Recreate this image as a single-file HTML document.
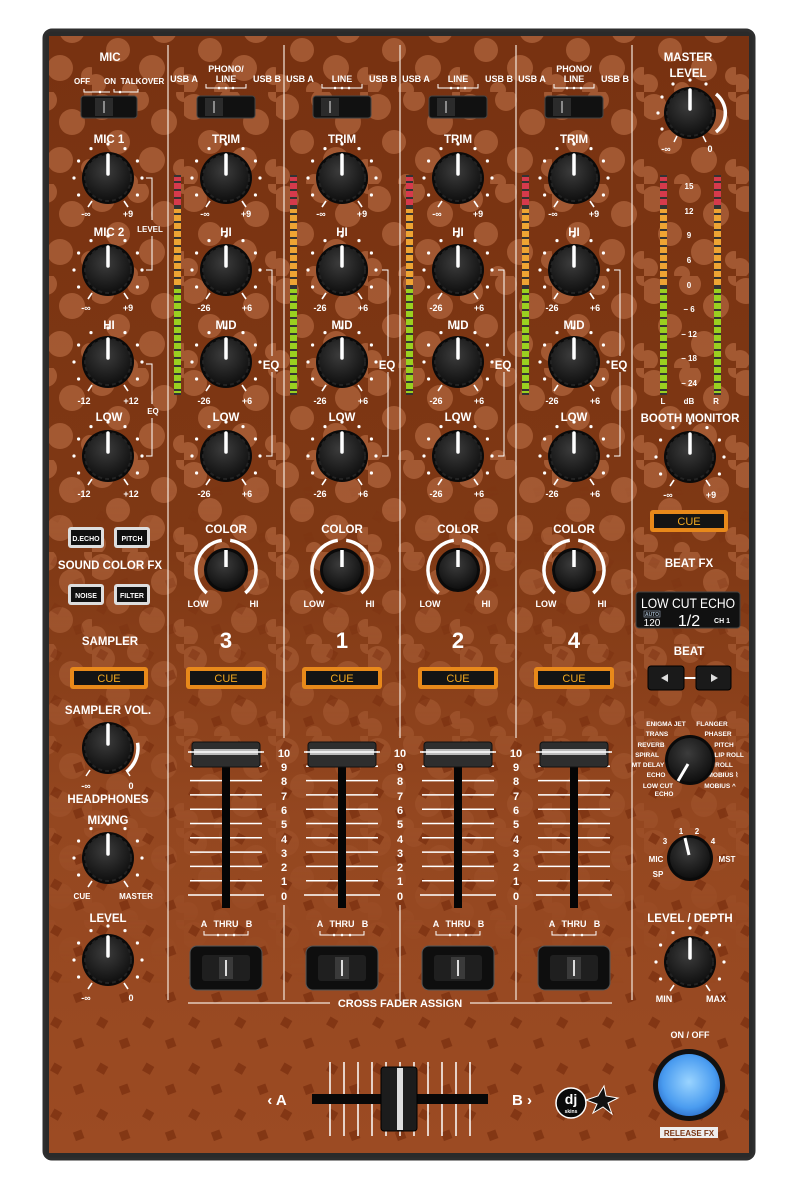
<!DOCTYPE html>
<html><head><meta charset="utf-8"><style>
html,body{margin:0;padding:0;background:#fff;}
svg{display:block;}
text{font-family:"Liberation Sans",sans-serif;font-weight:bold;fill:#fff;text-anchor:middle;}
.s9{font-size:9px}.s8{font-size:8px}.s11{font-size:11.5px}.s7{font-size:7px}
.cue, .cue text{fill:#f2a820;font-size:11px;font-weight:normal}
</style></head><body>
<svg width="799" height="1200" viewBox="0 0 799 1200" xmlns="http://www.w3.org/2000/svg">
<defs>
<linearGradient id="bg" x1="0" y1="0" x2="0" y2="1"><stop offset="0" stop-color="#783211"/><stop offset=".45" stop-color="#7f3814"/><stop offset=".7" stop-color="#944720"/><stop offset="1" stop-color="#9c4b23"/></linearGradient>
<pattern id="pc" patternUnits="userSpaceOnUse" width="92" height="92">
<g fill="#b3683f" opacity=".7">
<circle cx="10" cy="15" r="13"/><circle cx="46" cy="8" r="11"/><circle cx="72" cy="30" r="13"/><circle cx="26" cy="50" r="12"/><circle cx="60" cy="68" r="13"/><circle cx="90" cy="76" r="9"/><circle cx="4" cy="84" r="10"/><circle cx="38" cy="90" r="8"/><circle cx="92" cy="2" r="8"/></g></pattern>
<pattern id="pd" patternUnits="userSpaceOnUse" width="46" height="46">
<g fill="#7a300f" opacity=".75"><rect x="6" y="6" width="9" height="9" transform="rotate(30 10 10)"/><rect x="28" y="27" width="9" height="9" transform="rotate(-20 32 31)"/></g></pattern>
<linearGradient id="mg1" gradientUnits="userSpaceOnUse" x1="0" y1="0" x2="0" y2="1200"><stop offset=".42" stop-color="#fff"/><stop offset=".68" stop-color="#fff" stop-opacity=".35"/><stop offset=".82" stop-color="#fff" stop-opacity="0"/></linearGradient>
<linearGradient id="mg2" gradientUnits="userSpaceOnUse" x1="0" y1="0" x2="0" y2="1200"><stop offset=".4" stop-color="#fff" stop-opacity="0"/><stop offset=".62" stop-color="#fff"/></linearGradient>
<mask id="m1"><rect width="799" height="1200" fill="url(#mg1)"/></mask>
<mask id="m2"><rect width="799" height="1200" fill="url(#mg2)"/></mask>
<radialGradient id="kg" cx=".45" cy=".35" r=".7"><stop offset="0" stop-color="#3c3c3c"/><stop offset="1" stop-color="#0c0c0c"/></radialGradient>
<radialGradient id="blue" cx=".5" cy=".45" r=".6"><stop offset="0" stop-color="#9ad4ff"/><stop offset=".7" stop-color="#4a9cf0"/><stop offset="1" stop-color="#2a6cc8"/></radialGradient>
<g id="kn"><circle r="26" fill="#0a0a0a"/><circle r="23" fill="url(#kg)" stroke="#222" stroke-width="2" stroke-dasharray="4 3"/><line x1="0" y1="-4" x2="0" y2="-23" stroke="#fff" stroke-width="3.5" stroke-linecap="round"/></g>
<g id="dots" fill="#fff"><circle cx="0" cy="-34" r="1.6"/><circle cx="17" cy="-29.4" r="1.6"/><circle cx="29.4" cy="-17" r="1.6"/><circle cx="34" cy="0" r="1.6"/><circle cx="29.4" cy="17" r="1.6"/><circle cx="-17" cy="-29.4" r="1.6"/><circle cx="-29.4" cy="-17" r="1.6"/><circle cx="-34" cy="0" r="1.6"/><circle cx="-29.4" cy="17" r="1.6"/><path d="M16 23L20 29M-16 23L-20 29" stroke="#fff" stroke-width="1.6"/></g>
<g id="kd"><use href="#dots"/><use href="#kn"/></g>
<pattern id="gap" patternUnits="userSpaceOnUse" width="7" height="16"><rect y="6" width="7" height="2" fill="#333"/><rect y="14" width="7" height="2" fill="#333"/></pattern>
<g id="meter"><rect x="0" y="0" width="7" height="220" fill="#333"/><rect x="0" y="2" width="7" height="30" fill="#d63a4c"/><rect x="0" y="34" width="7" height="78" fill="#eea433"/><rect x="0" y="114" width="7" height="104" fill="#9ad020"/><rect x="0" y="0" width="7" height="220" fill="url(#gap)"/></g>
<g id="ch">
<path d="M-20 84v4h40v-4" stroke="#fff" fill="none" stroke-width="1"/>
<circle cx="-7" cy="88" r="1.3" fill="#fff"/><circle cx="0" cy="88" r="1.3" fill="#fff"/><circle cx="7" cy="88" r="1.3" fill="#fff"/>
<rect x="-29" y="96" width="58" height="22" rx="3" fill="#111" stroke="#444"/><rect x="-21" y="98" width="18" height="18" fill="#2b2b2b"/><line x1="-12" y1="101" x2="-12" y2="113" stroke="#aaa" stroke-width="1.5"/>
<use href="#kd" x="0" y="178"/><use href="#kd" x="0" y="270"/><use href="#kd" x="0" y="362"/><use href="#kd" x="0" y="456"/>
<path d="M40 270h6v86M46 372v84h-6" stroke="#fff" fill="none" stroke-width="1"/>
<use href="#meter" x="-52" y="175"/>
<path d="M-19.3 23A30 30 0 0 1 -4.2 -29.7M4.2 -29.7A30 30 0 0 1 19.3 23" transform="translate(0 570)" stroke="#fff" stroke-width="3.5" fill="none"/>
<g transform="translate(0 570)"><circle r="22" fill="#0a0a0a"/><circle r="19" fill="url(#kg)"/><line x1="0" y1="-3" x2="0" y2="-20" stroke="#fff" stroke-width="3.5"/></g>
<rect x="-40" y="667" width="80" height="22" rx="3" fill="#e8891a"/><rect x="-36" y="671" width="72" height="14" fill="#141414"/>
<g stroke="#fff" stroke-width="1.5"><path d="M-38 752h76M-36 766.3h72M-36 780.6h72M-36 794.9h72M-36 809.2h72M-36 823.5h72M-36 837.8h72M-36 852.1h72M-36 866.4h72M-36 880.7h72M-38 895h76"/></g>
<rect x="-4" y="762" width="8" height="146" fill="#050505"/>
<rect x="-34" y="742" width="68" height="25" rx="3" fill="#2e2e2e" stroke="#111"/><rect x="-32" y="749" width="64" height="6" fill="#bbb"/><line x1="-36" y1="752" x2="36" y2="752" stroke="#fff" stroke-width="1.5"/>
<path d="M-22 931v4h44v-4" stroke="#fff" fill="none" stroke-width="1"/>
<circle cx="-8" cy="935" r="1.3" fill="#fff"/><circle cx="0" cy="935" r="1.3" fill="#fff"/><circle cx="8" cy="935" r="1.3" fill="#fff"/>
<rect x="-36" y="946" width="72" height="44" rx="7" fill="#0e0e0e" stroke="#555"/><rect x="-24" y="955" width="48" height="26" rx="3" fill="#1f1f1f"/><rect x="-7" y="957" width="14" height="22" fill="#3a3a3a"/><line x1="0" y1="960" x2="0" y2="976" stroke="#ddd" stroke-width="2"/>
</g>
</defs>
<rect x="44" y="30" width="710" height="1129" rx="8" fill="#2a2a2a"/>
<rect x="49" y="36" width="700" height="1117" fill="url(#bg)"/>
<rect x="49" y="36" width="700" height="1117" fill="url(#pc)" mask="url(#m1)"/>
<rect x="49" y="36" width="700" height="1117" fill="url(#pd)" mask="url(#m2)"/>
<rect x="44" y="30" width="710" height="1129" rx="8" fill="none" stroke="#2e2e2e" stroke-width="3"/>

<g stroke="#f3e6dc" stroke-width="1.2">
<path d="M168 45V1000M632 45V1000M284 45V738M284 905V1000M400 45V738M400 905V1000M516 45V738M516 905V1000M188 1003H330M470 1003H612"/>
</g>

<use href="#ch" x="226"/><use href="#ch" x="342"/><use href="#ch" x="458"/><use href="#ch" x="574"/>

<g class="s9">
<text x="184" y="82">USB A</text><text x="226" y="72">PHONO/</text><text x="226" y="82">LINE</text><text x="267" y="82">USB B</text>
<text x="300" y="82">USB A</text><text x="342" y="82">LINE</text><text x="383" y="82">USB B</text>
<text x="416" y="82">USB A</text><text x="458" y="82">LINE</text><text x="499" y="82">USB B</text>
<text x="532" y="82">USB A</text><text x="574" y="72">PHONO/</text><text x="574" y="82">LINE</text><text x="615" y="82">USB B</text>
</g>
<g class="s11">
<text x="226" y="143">TRIM</text><text x="342" y="143">TRIM</text><text x="458" y="143">TRIM</text><text x="574" y="143">TRIM</text>
<text x="226" y="236">HI</text><text x="342" y="236">HI</text><text x="458" y="236">HI</text><text x="574" y="236">HI</text>
<text x="226" y="329">MID</text><text x="342" y="329">MID</text><text x="458" y="329">MID</text><text x="574" y="329">MID</text>
<text x="226" y="421">LOW</text><text x="342" y="421">LOW</text><text x="458" y="421">LOW</text><text x="574" y="421">LOW</text>
<text x="226" y="533">COLOR</text><text x="342" y="533">COLOR</text><text x="458" y="533">COLOR</text><text x="574" y="533">COLOR</text>
<text x="271" y="369">EQ</text><text x="387" y="369">EQ</text><text x="503" y="369">EQ</text><text x="619" y="369">EQ</text>
</g>
<g class="s9">
<text x="205" y="217">-∞</text><text x="246" y="217">+9</text><text x="321" y="217">-∞</text><text x="362" y="217">+9</text><text x="437" y="217">-∞</text><text x="478" y="217">+9</text><text x="553" y="217">-∞</text><text x="594" y="217">+9</text>
<text x="204" y="311">-26</text><text x="247" y="311">+6</text><text x="320" y="311">-26</text><text x="363" y="311">+6</text><text x="436" y="311">-26</text><text x="479" y="311">+6</text><text x="552" y="311">-26</text><text x="595" y="311">+6</text>
<text x="204" y="404">-26</text><text x="247" y="404">+6</text><text x="320" y="404">-26</text><text x="363" y="404">+6</text><text x="436" y="404">-26</text><text x="479" y="404">+6</text><text x="552" y="404">-26</text><text x="595" y="404">+6</text>
<text x="204" y="497">-26</text><text x="247" y="497">+6</text><text x="320" y="497">-26</text><text x="363" y="497">+6</text><text x="436" y="497">-26</text><text x="479" y="497">+6</text><text x="552" y="497">-26</text><text x="595" y="497">+6</text>
<text x="198" y="607">LOW</text><text x="254" y="607">HI</text><text x="314" y="607">LOW</text><text x="370" y="607">HI</text><text x="430" y="607">LOW</text><text x="486" y="607">HI</text><text x="546" y="607">LOW</text><text x="602" y="607">HI</text>
<text x="204" y="927">A</text><text x="226" y="927">THRU</text><text x="249" y="927">B</text>
<text x="320" y="927">A</text><text x="342" y="927">THRU</text><text x="365" y="927">B</text>
<text x="436" y="927">A</text><text x="458" y="927">THRU</text><text x="481" y="927">B</text>
<text x="552" y="927">A</text><text x="574" y="927">THRU</text><text x="597" y="927">B</text>
</g>
<g style="font-size:22px"><text x="226" y="648">3</text><text x="342" y="648">1</text><text x="458" y="648">2</text><text x="574" y="648">4</text></g>
<g style="font-size:11px">
<text x="284" y="757">10</text><text x="284" y="771">9</text><text x="284" y="785">8</text><text x="284" y="800">7</text><text x="284" y="814">6</text><text x="284" y="828">5</text><text x="284" y="843">4</text><text x="284" y="857">3</text><text x="284" y="871">2</text><text x="284" y="885">1</text><text x="284" y="900">0</text>
<text x="400" y="757">10</text><text x="400" y="771">9</text><text x="400" y="785">8</text><text x="400" y="800">7</text><text x="400" y="814">6</text><text x="400" y="828">5</text><text x="400" y="843">4</text><text x="400" y="857">3</text><text x="400" y="871">2</text><text x="400" y="885">1</text><text x="400" y="900">0</text>
<text x="516" y="757">10</text><text x="516" y="771">9</text><text x="516" y="785">8</text><text x="516" y="800">7</text><text x="516" y="814">6</text><text x="516" y="828">5</text><text x="516" y="843">4</text><text x="516" y="857">3</text><text x="516" y="871">2</text><text x="516" y="885">1</text><text x="516" y="900">0</text>
</g>
<text x="400" y="1007" style="font-size:11px">CROSS FADER ASSIGN</text>

<!-- left column -->
<text x="110" y="61" class="s11">MIC</text>
<g class="s8"><text x="82" y="84">OFF</text><text x="110" y="84">ON</text><text x="131" y="84">TALK</text><text x="153" y="84">OVER</text></g>
<path d="M84 89v3h26M114 89v3h24v-3" stroke="#fff" fill="none"/><circle cx="100" cy="92" r="1.3" fill="#fff"/><circle cx="120" cy="92" r="1.3" fill="#fff"/>
<rect x="81" y="96" width="56" height="22" rx="3" fill="#111" stroke="#444"/><rect x="95" y="98" width="18" height="18" fill="#2b2b2b"/><line x1="104" y1="101" x2="104" y2="113" stroke="#aaa" stroke-width="1.5"/>
<g class="s11"><text x="109" y="143">MIC 1</text><text x="109" y="236">MIC 2</text><text x="109" y="329">HI</text><text x="109" y="421">LOW</text></g>
<use href="#kd" x="108" y="178"/><use href="#kd" x="108" y="270"/><use href="#kd" x="108" y="362"/><use href="#kd" x="108" y="456"/>
<path d="M146 178h6v42M152 236v34h-6M146 364h6v40M152 418v38h-6" stroke="#fff" fill="none"/>
<g class="s8"><text x="150" y="232">LEVEL</text><text x="153" y="414">EQ</text></g>
<g class="s9"><text x="86" y="217">-∞</text><text x="128" y="217">+9</text><text x="86" y="311">-∞</text><text x="128" y="311">+9</text>
<text x="84" y="404">-12</text><text x="131" y="404">+12</text><text x="84" y="497">-12</text><text x="131" y="497">+12</text></g>
<g><rect x="68" y="527" width="36" height="21" rx="3" fill="#ddd"/><rect x="71" y="530" width="30" height="15" fill="#111"/>
<rect x="114" y="527" width="36" height="21" rx="3" fill="#ddd"/><rect x="117" y="530" width="30" height="15" fill="#111"/>
<rect x="68" y="584" width="36" height="21" rx="3" fill="#ddd"/><rect x="71" y="587" width="30" height="15" fill="#111"/>
<rect x="114" y="584" width="36" height="21" rx="3" fill="#ddd"/><rect x="117" y="587" width="30" height="15" fill="#111"/></g>
<g class="s7"><text x="86" y="541">D.ECHO</text><text x="132" y="541">PITCH</text><text x="86" y="598">NOISE</text><text x="132" y="598">FILTER</text></g>
<text x="110" y="569" class="s11">SOUND COLOR FX</text>
<text x="110" y="645" class="s11">SAMPLER</text>
<rect x="70" y="667" width="78" height="22" rx="3" fill="#e8891a"/><rect x="74" y="671" width="70" height="14" fill="#141414"/>
<text x="108" y="714" class="s11">SAMPLER VOL.</text>
<path d="M-19.3 23A30 30 0 1 1 19.3 23" transform="translate(108 748)" stroke="#fff" stroke-width="3.5" fill="none" stroke-dasharray="0 115 60"/>
<use href="#kn" x="108" y="748"/>
<path d="M90 770l-4 6M126 770l4 6" stroke="#fff" stroke-width="1.5"/>
<g class="s9"><text x="86" y="789">-∞</text><text x="131" y="789">0</text></g>
<text x="108" y="803" class="s11">HEADPHONES</text>
<text x="108" y="824" class="s11">MIXING</text>
<use href="#kd" x="108" y="858"/>
<g class="s8"><text x="82" y="899">CUE</text><text x="136" y="899">MASTER</text></g>
<text x="108" y="922" class="s11">LEVEL</text>
<use href="#kd" x="108" y="960"/>
<g class="s9"><text x="86" y="1001">-∞</text><text x="131" y="1001">0</text></g>

<!-- right column -->
<text x="688" y="61" class="s11">MASTER</text>
<text x="688" y="77" class="s11">LEVEL</text>
<g fill="#fff"><circle cx="673" cy="84" r="1.6"/><circle cx="690" cy="80" r="1.6"/><circle cx="706" cy="84" r="1.6"/><circle cx="662" cy="97" r="1.6"/><circle cx="658" cy="113" r="1.6"/><circle cx="662" cy="129" r="1.6"/></g>
<path d="M716 94A24 24 0 0 1 716 132" stroke="#fff" stroke-width="3.5" fill="none"/>
<path d="M677 136l-3 6M703 136l3 6" stroke="#fff" stroke-width="1.5"/>
<use href="#kn" x="690" y="113"/>
<g class="s9"><text x="666" y="152">-∞</text><text x="710" y="152">0</text></g>
<use href="#meter" x="660" y="175"/><use href="#meter" x="714" y="175"/>
<g class="s8"><text x="689" y="189">15</text><text x="689" y="214">12</text><text x="689" y="238">9</text><text x="689" y="263">6</text><text x="689" y="288">0</text><text x="689" y="312">− 6</text><text x="689" y="337">− 12</text><text x="689" y="361">− 18</text><text x="689" y="386">− 24</text>
<text x="663" y="404">L</text><text x="689" y="404">dB</text><text x="716" y="404">R</text></g>
<text x="690" y="422" class="s11">BOOTH MONITOR</text>
<use href="#kd" x="690" y="457"/>
<g class="s9"><text x="668" y="498">-∞</text><text x="711" y="498">+9</text></g>
<rect x="650" y="510" width="78" height="22" rx="3" fill="#e8891a"/><rect x="654" y="514" width="70" height="14" fill="#141414"/>
<g class="cue"><text x="226" y="682">CUE</text><text x="342" y="682">CUE</text><text x="458" y="682">CUE</text><text x="574" y="682">CUE</text><text x="109" y="682">CUE</text><text x="689" y="525">CUE</text></g>
<text x="689" y="567" class="s11">BEAT FX</text>
<rect x="636" y="592" width="104" height="36" rx="3" fill="#111" stroke="#444"/>
<text x="688" y="608" textLength="94" lengthAdjust="spacingAndGlyphs" style="font-size:14px;font-weight:normal">LOW CUT ECHO</text>
<rect x="644" y="611" width="16" height="6" fill="none" stroke="#9ab" stroke-width=".6"/><text x="652" y="616" style="font-size:5px;fill:#9ab">AUTO</text>
<text x="652" y="626" style="font-size:10px;font-weight:normal">120</text>
<text x="689" y="626" style="font-size:16px;font-weight:normal">1/2</text>
<text x="722" y="623" class="s7">CH 1</text>
<text x="689" y="655" class="s11">BEAT</text>
<line x1="680" y1="678" x2="700" y2="678" stroke="#fff" stroke-width="2"/>
<rect x="648" y="666" width="36" height="24" rx="3" fill="#1a1a1a" stroke="#000"/><rect x="696" y="666" width="35" height="24" rx="3" fill="#1a1a1a" stroke="#000"/>
<path d="M661 678l7-4v8z" fill="#ddd"/><path d="M718 678l-7-4v8z" fill="#ddd"/>
<g style="font-size:6.5px"><text x="666" y="726">ENIGMA JET</text><text x="712" y="726">FLANGER</text><text x="657" y="736">TRANS</text><text x="718" y="736">PHASER</text><text x="651" y="747">REVERB</text><text x="724" y="747">PITCH</text><text x="647" y="757">SPIRAL</text><text x="727" y="757">SLIP ROLL</text><text x="648" y="767">MT DELAY</text><text x="724" y="767">ROLL</text><text x="656" y="777">ECHO</text><text x="723" y="777">MOBIUS ⌇</text><text x="658" y="788">LOW CUT</text><text x="664" y="796">ECHO</text><text x="720" y="788">MOBIUS ^</text></g>
<g transform="translate(690 760)"><circle r="25" fill="#0a0a0a"/><circle r="22" fill="url(#kg)"/><line x1="-2" y1="4" x2="-12" y2="21" stroke="#fff" stroke-width="3"/></g>
<g class="s8"><text x="665" y="844">3</text><text x="681" y="834">1</text><text x="697" y="834">2</text><text x="713" y="844">4</text><text x="656" y="862">MIC</text><text x="658" y="877">SP</text><text x="727" y="862">MST</text></g>
<g transform="translate(690 858)"><circle r="23" fill="#0a0a0a"/><circle r="20" fill="url(#kg)"/><line x1="-5" y1="-20" x2="-1" y2="-3" stroke="#fff" stroke-width="3"/></g>
<text x="690" y="922" class="s11">LEVEL / DEPTH</text>
<use href="#kd" x="690" y="962"/>
<g class="s9"><text x="664" y="1002">MIN</text><text x="716" y="1002">MAX</text></g>
<text x="690" y="1038" class="s9">ON / OFF</text>
<circle cx="689" cy="1085" r="36" fill="#111"/><circle cx="689" cy="1085" r="31" fill="url(#blue)"/>
<rect x="660" y="1127" width="58" height="11" fill="#eee"/>
<text x="689" y="1136" style="font-size:8px;fill:#7a3513">RELEASE FX</text>

<!-- crossfader -->
<g stroke="#fff" stroke-width="1.5"><path d="M330 1062v74M344 1062v74M358 1062v74M372 1062v74M386 1062v74M400 1062v74M414 1062v74M428 1062v74M442 1062v74M456 1062v74M470 1062v74"/></g>
<rect x="312" y="1094" width="176" height="10" fill="#080808"/>
<rect x="381" y="1067" width="36" height="64" rx="3" fill="#1c1c1c" stroke="#000"/><rect x="397" y="1068" width="6" height="62" fill="#ddd"/>
<text x="277" y="1105" style="font-size:15px">‹ A</text><text x="522" y="1105" style="font-size:15px">B ›</text>
<circle cx="571" cy="1103" r="15" fill="#0a0a0a" stroke="#fff" stroke-width="1.5"/>
<text x="571" y="1104" style="font-size:14px">dj</text><text x="571" y="1113" style="font-size:5px">skins</text>
<path d="M586 1100l12-4 6-10 2 10 12 2-10 5 4 11-9-7-10 6 4-9z" fill="#111" stroke="#fff" stroke-width="1"/>
</svg>
</body></html>
